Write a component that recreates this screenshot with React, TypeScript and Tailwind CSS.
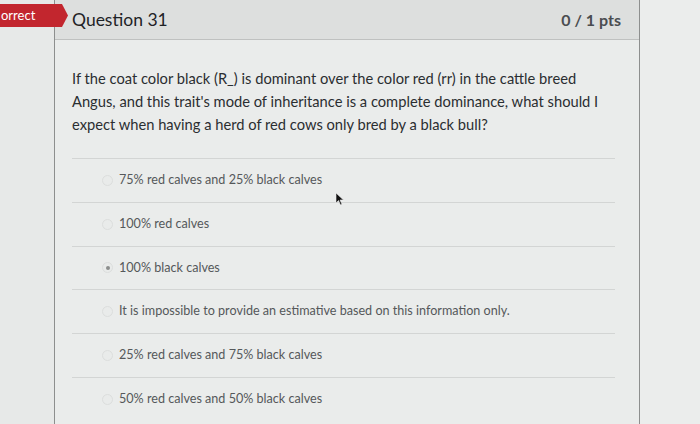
import React from "react";

const options = [
  { text: "75% red calves and 25% black calves", selected: false },
  { text: "100% red calves", selected: false },
  { text: "100% black calves", selected: true },
  { text: "It is impossible to provide an estimative based on this information only.", selected: false },
  { text: "25% red calves and 75% black calves", selected: false },
  { text: "50% red calves and 50% black calves", selected: false },
];

export default function App() {
  return (
    <div
      className="relative w-[700px] h-[424px] overflow-hidden bg-[#e7e9e8] flex"
      style={{ fontFamily: "Lato, 'Open Sans', 'Noto Sans', sans-serif" }}
    >
      <div className="w-[54px] shrink-0" />
      <div className="w-[586px] shrink-0 border-l border-r border-[#8d8f8e] flex flex-col">
        <div className="h-[40px] bg-[#dddfde] border-b border-[#bfc1c0] flex items-center justify-between pl-[17px] pr-[18px]">
          <span className="text-[17.5px] text-[#1f2326] leading-none">Question 31</span>
          <span className="text-[16px] font-bold text-[#4a4d50] leading-none">0 / 1 pts</span>
        </div>
        <div className="flex-1 bg-[#eaeceb] pl-[17px] pr-[24px] pt-[27px]">
          <p className="w-[540px] text-[14.7px] leading-[23px] text-[#2a2e31]">
            If the coat color black (R_) is dominant over the color red (rr) in the cattle breed Angus, and this trait's mode of inheritance is a complete dominance, what should I expect when having a herd of red cows only bred by a black bull?
          </p>
          <div className="mt-[22px] flex flex-col">
            {options.map((o, i) => (
              <div
                key={i}
                className="h-[43.8px] border-t border-[#d3d5d4] flex items-center"
              >
                <div className="w-[30px] shrink-0" />
                <div className="w-[11px] h-[11px] rounded-full border border-[#dcdedd] bg-[#e9ebea] flex items-center justify-center shrink-0">
                  {o.selected && <div className="w-[4px] h-[4px] rounded-full bg-[#8c8e8d]" />}
                </div>
                <span className="ml-[6px] text-[12.6px] text-[#55585a]">{o.text}</span>
              </div>
            ))}
          </div>
        </div>
      </div>
      <div className="flex-1 bg-[#ebedec]" />

      <div className="absolute left-0 top-[4px] h-[23px] flex">
        <div className="h-full w-[62px] bg-[#c2262e] flex items-center pl-[1px]">
          <span className="text-[13px] text-white leading-none whitespace-nowrap">orrect</span>
        </div>
        <svg width="6" height="23" viewBox="0 0 6 23" className="block">
          <polygon points="0,0 0,23 6,11.5" fill="#c2262e" />
        </svg>
      </div>

      <svg className="absolute left-[335px] top-[192px]" width="10" height="14" viewBox="0 0 10 14">
        <path d="M1 1 L1 11 L3.5 8.5 L5.5 13 L7 12.3 L5 8 L8.5 8 Z" fill="#111" stroke="#eee" strokeWidth="0.6" />
      </svg>
    </div>
  );
}
